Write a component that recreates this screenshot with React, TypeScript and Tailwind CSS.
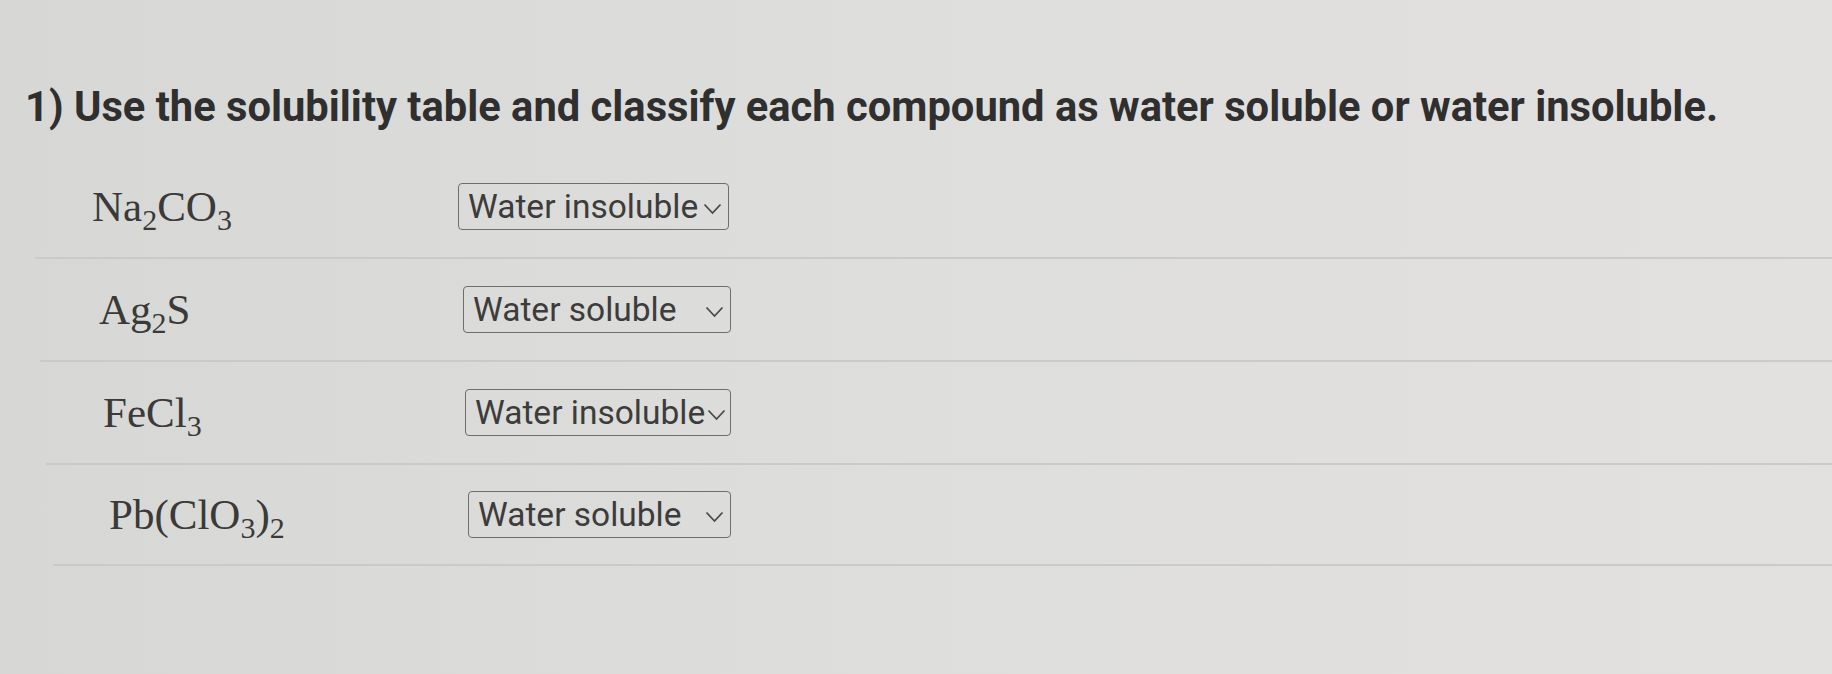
import React from "react";

type Part = { t: string; sub?: boolean };

// photo is slightly skewed, so each row gets its own offsets
const rows: { formula: Part[]; value: string; row: string; cell: string; h: string; w: string }[] = [
  {
    formula: [{ t: "Na" }, { t: "2", sub: true }, { t: "CO" }, { t: "3", sub: true }],
    value: "Water insoluble",
    row: "ml-[35px]",
    cell: "w-[423px] pl-[57px]",
    h: "h-[103px]",
    w: "w-[271px]",
  },
  {
    formula: [{ t: "Ag" }, { t: "2", sub: true }, { t: "S" }],
    value: "Water soluble",
    row: "ml-[40px]",
    cell: "w-[423px] pl-[59px]",
    h: "h-[103px]",
    w: "w-[268px]",
  },
  {
    formula: [{ t: "FeCl" }, { t: "3", sub: true }],
    value: "Water insoluble",
    row: "ml-[46px]",
    cell: "w-[419px] pl-[57px]",
    h: "h-[103px]",
    w: "w-[266px]",
  },
  {
    formula: [{ t: "Pb(ClO" }, { t: "3", sub: true }, { t: ")" }, { t: "2", sub: true }],
    value: "Water soluble",
    row: "ml-[53px]",
    cell: "w-[415px] pl-[56px]",
    h: "h-[101px]",
    w: "w-[263px]",
  },
];

function Formula({ parts }: { parts: Part[] }) {
  return (
    <span className="font-['Liberation_Serif',serif] text-[43px] leading-none text-[#3a3a3a] whitespace-nowrap">
      {parts.map((p, i) =>
        p.sub ? (
          <span key={i} className="relative top-[9px] text-[30px]">
            {p.t}
          </span>
        ) : (
          <span key={i}>{p.t}</span>
        )
      )}
    </span>
  );
}

function FakeSelect({ value, w }: { value: string; w: string }) {
  return (
    <div className={`${w} flex h-[47px] shrink-0 items-center justify-between rounded-[4px] border-[1.5px] border-[#6e6e6e] pl-[9px] pr-[6px]`}>
      <span className="font-['Roboto',sans-serif] text-[33.5px] leading-none text-[#3c3c3c] whitespace-nowrap">
        {value}
      </span>
      <svg width="19" height="12" viewBox="0 0 19 12" className="ml-[2px] mt-[4px] shrink-0">
        <path d="M1.5 1.5 L9.5 10 L17.5 1.5" fill="none" stroke="#4a4a4a" strokeWidth="1.8" />
      </svg>
    </div>
  );
}

export default function App() {
  return (
    <div className="h-[674px] w-[1832px] overflow-hidden bg-gradient-to-r from-[#d7d8d5] via-[#dededc] to-[#e3e1e0]">
      <div className="pl-[25px] pt-[84px]">
        <h1 className="font-['Roboto',sans-serif] text-[41.7px] font-bold leading-[46px] text-[#2f2f2f] whitespace-nowrap">
          1) Use the solubility table and classify each compound as water soluble or water insoluble.
        </h1>
      </div>
      <div className="mt-[26px]">
        {rows.map((r, i) => (
          <div key={i} className={`${r.h} ${r.row} flex items-center border-b-2 border-[#cacac8]`}>
            <div className={`${r.cell} shrink-0`}>
              <Formula parts={r.formula} />
            </div>
            <FakeSelect value={r.value} w={r.w} />
          </div>
        ))}
      </div>
    </div>
  );
}
